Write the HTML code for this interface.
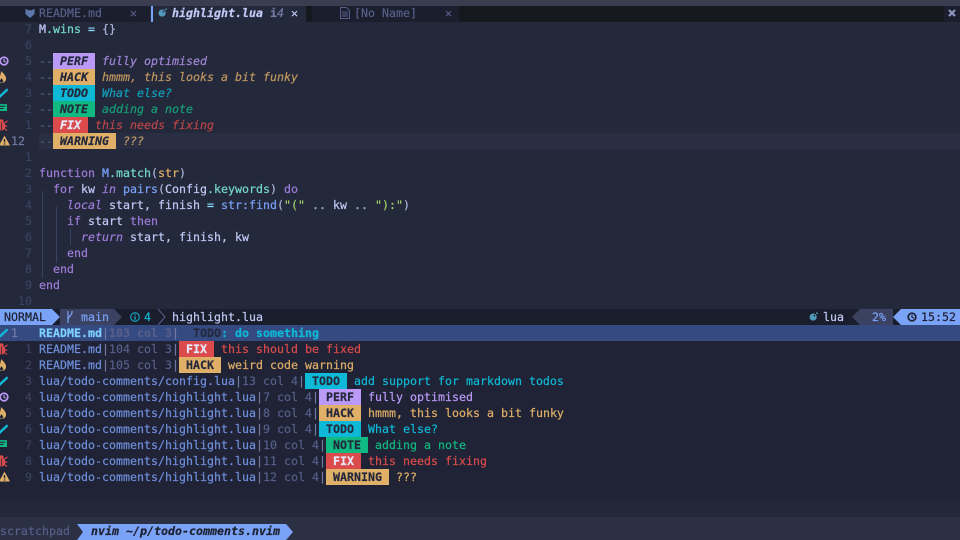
<!DOCTYPE html>
<html><head><meta charset="utf-8"><style>
html,body{margin:0;padding:0;background:#24283b}
#s{position:relative;width:960px;height:540px;overflow:hidden;background:#24283b;font-family:"DejaVu Sans Mono","Liberation Mono",monospace;font-size:11.63px;line-height:16px;color:#c0caf5;-webkit-text-stroke:.2px;filter:blur(.3px)}
.a{position:absolute;white-space:pre}
.b{position:absolute}
i{font-style:italic}
b{font-weight:bold}
svg{position:absolute;overflow:visible}
.n{color:#3b4261}.c{color:#565f89}
.k{color:#9d7cd8}.t{color:#73daca}.f{color:#7aa2f7}.y{color:#e0af68}.g{color:#9ece6a}.o{color:#89ddff}.p{color:#a9b1d6}
.bd{font-weight:bold;display:inline-block;height:16px}
.qf{color:#6f8fdc}.sp{color:#737aa2}.ps{color:#565f89}
.m{opacity:.82}
</style></head><body><div id="s">
<svg width="0" height="0" style="position:absolute"><defs>
<symbol id="clock" viewBox="0 0 10 10"><circle cx="5" cy="5" r="3.8" fill="none" stroke="currentColor" stroke-width="1.7"/><path d="M5 2.8V5.2L6.8 6.3" fill="none" stroke="currentColor" stroke-width="1.2"/></symbol>
<symbol id="flame" viewBox="0 0 10 10"><path d="M5 0C6 2 8.8 3.5 8.8 6.3 8.8 8.6 7 10 5 10S1.2 8.6 1.2 6.3C1.2 5 1.8 4 2.6 3.2 2.8 4 3.1 4.6 3.7 4.8 4.2 3.2 4.2 1.6 5 0Z" fill="currentColor"/><path d="M5 6C5.8 7 6.4 7.5 6.4 8.3 6.4 9.2 5.7 9.7 5 9.7S3.6 9.2 3.6 8.3C3.6 7.5 4.4 7 5 6Z" fill="#24283b"/></symbol>
<symbol id="check" viewBox="0 0 10 10"><path d="M0 7L2.4 8.8 9.6 2" fill="none" stroke="currentColor" stroke-width="2.2"/></symbol>
<symbol id="note" viewBox="0 0 10 10"><path d="M.5 1H9.5V7.3H3.2L.5 9.6Z" fill="currentColor"/><path d="M2 3H8M2 5H6.5" stroke="#24283b" stroke-width="1"/></symbol>
<symbol id="bug" viewBox="0 0 10 10"><ellipse cx="5" cy="6" rx="3.2" ry="3.7" fill="currentColor"/><circle cx="5" cy="2" r="1.8" fill="currentColor"/><path d="M0 1.5L2.5 3.5M10 1.5L7.5 3.5M0 6H9.8M.3 9.6L2.5 8M9.7 9.6L7.5 8" stroke="currentColor" stroke-width=".9" fill="none"/><path d="M5 3V9.5" stroke="#24283b" stroke-width=".7"/></symbol>
<symbol id="warn" viewBox="0 0 10 10"><path d="M5 .6L10 9.6H0Z" fill="currentColor"/><path d="M5 3.6V6.8M5 7.6V8.8" stroke="#24283b" stroke-width="1.2"/></symbol>
<symbol id="moon" viewBox="0 0 10 10"><circle cx="4.6" cy="5.6" r="4" fill="currentColor"/><circle cx="6" cy="4" r="1" fill="#24283b"/><circle cx="8.8" cy="1.4" r="1" fill="currentColor"/></symbol>
<symbol id="info" viewBox="0 0 10 10"><circle cx="5" cy="5" r="4.3" fill="none" stroke="currentColor" stroke-width="1"/><path d="M5 4.2V7.8M5 2.2V3.4" stroke="currentColor" stroke-width="1.2"/></symbol>
</defs></svg>

<!-- top -->
<div class="b" style="left:0;top:0;width:960px;height:6px;background:#3a3c4f"></div>
<div class="b" style="left:0;top:6px;width:960px;height:16px;background:#15181f"></div>
<div class="b" style="left:0;top:6px;width:150px;height:16px;background:#1b1e2c"></div>
<div class="b" style="left:150px;top:6px;width:156px;height:16px;background:#24283b"></div>
<div class="b" style="left:312px;top:6px;width:147px;height:16px;background:#1b1e2c"></div>
<div class="b" style="left:151px;top:6px;width:2px;height:16px;background:#7aa2f7"></div>
<div class="b" style="left:944px;top:6px;width:16px;height:16px;background:#1b1e2c"></div>
<svg style="left:25px;top:8px" width="10" height="10" viewBox="0 0 10 10"><path d="M.5 .5L3 2.2H7L9.5 .5V6L5 10 .5 6Z" fill="#5f78ad"/></svg>
<div class="a" style="left:39px;top:5px;color:#565f89">README.md</div>
<div class="a" style="left:130px;top:5px;color:#565f89">✕</div>
<svg style="left:158px;top:8px;color:#519aba" width="9" height="9"><use href="#moon" width="9" height="9"/></svg>
<div class="a" style="left:172px;top:5px;color:#c0caf5"><b><i>highlight.lua</i></b></div>
<div class="a" style="left:270px;top:5px;color:#737aa2"><b>i</b><i>4</i></div>
<div class="a" style="left:291px;top:5px;color:#c0caf5">✕</div>
<svg style="left:340px;top:7px" width="10" height="12" viewBox="0 0 10 12"><path d="M.5.5H6.5L9.5 3.5V11.5H.5ZM2 5H8M2 7H8M2 9H8" fill="none" stroke="#565f89" stroke-width="1"/></svg>
<div class="a" style="left:354px;top:5px;color:#565f89">[No Name]</div>
<div class="a" style="left:445px;top:5px;color:#565f89">✕</div>
<svg style="left:948px;top:9px" width="8" height="8"><path d="M1 1L7 7M7 1L1 7" stroke="#8f97c0" stroke-width="2.2"/></svg>

<!-- cursor line + guides -->
<div class="b" style="left:39px;top:133px;width:921px;height:16px;background:#292e42"></div>
<div class="b" style="left:42px;top:191px;width:1px;height:87px;background:#3b4261"></div>
<div class="b" style="left:56px;top:207px;width:1px;height:56px;background:#3b4261"></div>
<div class="b" style="left:70px;top:229px;width:1px;height:16px;background:#3b4261"></div>

<!-- line numbers -->
<div class="a n" style="left:25px;top:21px">7</div>
<div class="a n" style="left:25px;top:37px">6</div>
<div class="a n" style="left:25px;top:53px">5</div>
<div class="a n" style="left:25px;top:69px">4</div>
<div class="a n" style="left:25px;top:85px">3</div>
<div class="a n" style="left:25px;top:101px">2</div>
<div class="a n" style="left:25px;top:117px">1</div>
<div class="a" style="left:11px;top:133px;color:#737aa2">12</div>
<div class="a n" style="left:25px;top:149px">1</div>
<div class="a n" style="left:25px;top:165px">2</div>
<div class="a n" style="left:25px;top:181px">3</div>
<div class="a n" style="left:25px;top:197px">4</div>
<div class="a n" style="left:25px;top:213px">5</div>
<div class="a n" style="left:25px;top:229px">6</div>
<div class="a n" style="left:25px;top:245px">7</div>
<div class="a n" style="left:25px;top:261px">8</div>
<div class="a n" style="left:25px;top:277px">9</div>
<div class="a n" style="left:18px;top:293px">10</div>

<!-- signs -->
<svg style="left:-1px;top:56px;color:#bb9af7" width="10" height="10"><use href="#clock" width="10" height="10"/></svg>
<svg style="left:-5px;top:71px;color:#e0af68" width="13" height="12"><use href="#flame" width="13" height="12"/></svg>
<svg style="left:-3px;top:87px;color:#0db9d7" width="11" height="11"><use href="#check" width="11" height="11"/></svg>
<svg style="left:-4px;top:103px;color:#10b981" width="12" height="11"><use href="#note" width="12" height="11"/></svg>
<svg style="left:-5px;top:119px;color:#db4b4b" width="13" height="12"><use href="#bug" width="13" height="12"/></svg>
<svg style="left:-1px;top:135px;color:#e0af68" width="11" height="11"><use href="#warn" width="11" height="11"/></svg>

<!-- code -->
<div class="a" style="left:39px;top:21px">M<span class="t">.wins</span> <span class="o">=</span> <span class="p">{}</span></div>
<div class="a" style="left:39px;top:53px"><span class="c">--</span><span class="bd" style="background:#bb9af7;color:#24283b"><i> PERF </i></span> <i class="m" style="color:#bb9af7">fully optimised</i></div>
<div class="a" style="left:39px;top:69px"><span class="c">--</span><span class="bd" style="background:#e0af68;color:#24283b"><i> HACK </i></span> <i class="m" style="color:#e0af68">hmmm, this looks a bit funky</i></div>
<div class="a" style="left:39px;top:85px"><span class="c">--</span><span class="bd" style="background:#0db9d7;color:#24283b"><i> TODO </i></span> <i class="m" style="color:#0db9d7">What else?</i></div>
<div class="a" style="left:39px;top:101px"><span class="c">--</span><span class="bd" style="background:#10b981;color:#24283b"><i> NOTE </i></span> <i class="m" style="color:#10b981">adding a note</i></div>
<div class="a" style="left:39px;top:117px"><span class="c">--</span><span class="bd" style="background:#db4b4b;color:#e6e9fb"><i> FIX </i></span> <i class="m" style="color:#db4b4b">this needs fixing</i></div>
<div class="a" style="left:39px;top:133px"><span class="c">--</span><span class="bd" style="background:#e0af68;color:#24283b"><i> WARNING </i></span> <i class="m" style="color:#e0af68">???</i></div>

<div class="a" style="left:39px;top:165px"><span class="k">function</span> <span class="f">M</span><span class="t">.match</span><span class="p">(</span><span class="y">str</span><span class="p">)</span></div>
<div class="a" style="left:53px;top:181px"><span class="k">for</span> kw <i class="k">in</i> <span class="f">pairs</span><span class="p">(</span>Config<span class="t">.keywords</span><span class="p">)</span> <span class="k">do</span></div>
<div class="a" style="left:67px;top:197px"><i class="k">local</i> start, finish <span class="o">=</span> <span class="f">str:find</span><span class="p">(</span><span class="g">"("</span> <span class="p">..</span> kw <span class="p">..</span> <span class="g">"):"</span><span class="p">)</span></div>
<div class="a" style="left:67px;top:213px"><span class="k">if</span> start <span class="k">then</span></div>
<div class="a" style="left:81px;top:229px"><i class="k">return</i> start, finish, kw</div>
<div class="a k" style="left:67px;top:245px">end</div>
<div class="a k" style="left:53px;top:261px">end</div>
<div class="a k" style="left:39px;top:277px">end</div>

<!-- statusline -->
<div class="b" style="left:0;top:309px;width:960px;height:16px;background:#1a1d2b"></div>
<svg style="left:0;top:309px" width="960" height="16">
<path d="M60 0H114L122 8 114 16H60Z" fill="#3b4261"/>
<path d="M0 0H52L60 8 52 16H0Z" fill="#7aa2f7"/>
<path d="M158 0L165 8 158 16" fill="none" stroke="#565f89" stroke-width="1"/>
<path d="M960 0H901L893 8 901 16H960Z" fill="#7aa2f7"/>
<path d="M893 0H860L852 8 860 16H893Z" fill="#3b4261"/>
<path d="M68 2V14M72 2C73 6 68 7 68 11" fill="none" stroke="#7aa2f7" stroke-width="1.2"/>
</svg>
<div class="a" style="left:4px;top:309px;color:#1d202f">NORMAL</div>
<div class="a" style="left:81px;top:309px;color:#7aa2f7">main</div>
<svg style="left:130px;top:312px;color:#0db9d7" width="10" height="10"><use href="#info" width="10" height="10"/></svg>
<div class="a" style="left:144px;top:309px;color:#0db9d7">4</div>
<div class="a" style="left:172px;top:309px">highlight.lua</div>
<svg style="left:809px;top:312px;color:#519aba" width="9" height="9"><use href="#moon" width="9" height="9"/></svg>
<div class="a" style="left:823px;top:309px;color:#c0caf5">lua</div>
<div class="a" style="left:872px;top:309px;color:#7aa2f7">2%</div>
<svg style="left:907px;top:312px;color:#1d202f" width="10" height="10"><use href="#clock" width="10" height="10"/></svg>
<div class="a" style="left:921px;top:309px;color:#1d202f">15:52</div>

<!-- quickfix -->
<div class="b" style="left:0;top:325px;width:960px;height:176px;background:#1f2335"></div>
<div class="b" style="left:0;top:501px;width:960px;height:16px;background:#23273a"></div>
<div class="b" style="left:0;top:325px;width:960px;height:16px;background:#364a82"></div>
<svg style="left:-3px;top:327px;color:#0db9d7" width="11" height="11"><use href="#check" width="11" height="11"/></svg>
<svg style="left:-5px;top:343px;color:#db4b4b" width="13" height="12"><use href="#bug" width="13" height="12"/></svg>
<svg style="left:-5px;top:359px;color:#e0af68" width="13" height="12"><use href="#flame" width="13" height="12"/></svg>
<svg style="left:-3px;top:375px;color:#0db9d7" width="11" height="11"><use href="#check" width="11" height="11"/></svg>
<svg style="left:-1px;top:392px;color:#bb9af7" width="10" height="10"><use href="#clock" width="10" height="10"/></svg>
<svg style="left:-5px;top:407px;color:#e0af68" width="13" height="12"><use href="#flame" width="13" height="12"/></svg>
<svg style="left:-3px;top:423px;color:#0db9d7" width="11" height="11"><use href="#check" width="11" height="11"/></svg>
<svg style="left:-4px;top:439px;color:#10b981" width="12" height="11"><use href="#note" width="12" height="11"/></svg>
<svg style="left:-5px;top:455px;color:#db4b4b" width="13" height="12"><use href="#bug" width="13" height="12"/></svg>
<svg style="left:-1px;top:471px;color:#e0af68" width="11" height="11"><use href="#warn" width="11" height="11"/></svg>

<div class="a" style="left:11px;top:325px;color:#737aa2">1</div>
<div class="a n" style="left:25px;top:341px">1</div>
<div class="a n" style="left:25px;top:357px">2</div>
<div class="a n" style="left:25px;top:373px">3</div>
<div class="a n" style="left:25px;top:389px">4</div>
<div class="a n" style="left:25px;top:405px">5</div>
<div class="a n" style="left:25px;top:421px">6</div>
<div class="a n" style="left:25px;top:437px">7</div>
<div class="a n" style="left:25px;top:453px">8</div>
<div class="a n" style="left:25px;top:469px">9</div>

<div class="a" style="left:39px;top:325px"><b style="color:#7dcfff">README.md</b><span class="sp">|</span><b class="ps">103 col 3</b><span class="sp">|</span> <b style="color:#24283b"> TODO</b><b style="color:#0db9d7">: do something</b></div>
<div class="a" style="left:39px;top:341px"><span class="qf">README.md</span><span class="sp">|</span><span class="ps">104 col 3</span><span class="sp">|</span><span class="bd" style="background:#db4b4b;color:#e6e9fb"> FIX </span> <span style="color:#db4b4b">this should be fixed</span></div>
<div class="a" style="left:39px;top:357px"><span class="qf">README.md</span><span class="sp">|</span><span class="ps">105 col 3</span><span class="sp">|</span><span class="bd" style="background:#e0af68;color:#24283b"> HACK </span> <span style="color:#e0af68">weird code warning</span></div>
<div class="a" style="left:39px;top:373px"><span class="qf">lua/todo-comments/config.lua</span><span class="sp">|</span><span class="ps">13 col 4</span><span class="sp">|</span><span class="bd" style="background:#0db9d7;color:#24283b"> TODO </span> <span style="color:#0db9d7">add support for markdown todos</span></div>
<div class="a" style="left:39px;top:389px"><span class="qf">lua/todo-comments/highlight.lua</span><span class="sp">|</span><span class="ps">7 col 4</span><span class="sp">|</span><span class="bd" style="background:#bb9af7;color:#24283b"> PERF </span> <span style="color:#bb9af7">fully optimised</span></div>
<div class="a" style="left:39px;top:405px"><span class="qf">lua/todo-comments/highlight.lua</span><span class="sp">|</span><span class="ps">8 col 4</span><span class="sp">|</span><span class="bd" style="background:#e0af68;color:#24283b"> HACK </span> <span style="color:#e0af68">hmmm, this looks a bit funky</span></div>
<div class="a" style="left:39px;top:421px"><span class="qf">lua/todo-comments/highlight.lua</span><span class="sp">|</span><span class="ps">9 col 4</span><span class="sp">|</span><span class="bd" style="background:#0db9d7;color:#24283b"> TODO </span> <span style="color:#0db9d7">What else?</span></div>
<div class="a" style="left:39px;top:437px"><span class="qf">lua/todo-comments/highlight.lua</span><span class="sp">|</span><span class="ps">10 col 4</span><span class="sp">|</span><span class="bd" style="background:#10b981;color:#24283b"> NOTE </span> <span style="color:#10b981">adding a note</span></div>
<div class="a" style="left:39px;top:453px"><span class="qf">lua/todo-comments/highlight.lua</span><span class="sp">|</span><span class="ps">11 col 4</span><span class="sp">|</span><span class="bd" style="background:#db4b4b;color:#e6e9fb"> FIX </span> <span style="color:#db4b4b">this needs fixing</span></div>
<div class="a" style="left:39px;top:469px"><span class="qf">lua/todo-comments/highlight.lua</span><span class="sp">|</span><span class="ps">12 col 4</span><span class="sp">|</span><span class="bd" style="background:#e0af68;color:#24283b"> WARNING </span> <span style="color:#e0af68">???</span></div>

<!-- tmux -->
<div class="b" style="left:0;top:517px;width:960px;height:23px;background:#2b3044"></div>
<svg style="left:0;top:524px" width="400" height="16"><path d="M77 0H286L293 8 286 16H77L83 8Z" fill="#7aa2f7"/></svg>
<div class="a" style="left:0;top:523px;color:#565f89">scratchpad</div>
<div class="a" style="left:91px;top:523px;color:#1d202f"><b><i>nvim ~/p/todo-comments.nvim</i></b></div>
</div></body></html>
